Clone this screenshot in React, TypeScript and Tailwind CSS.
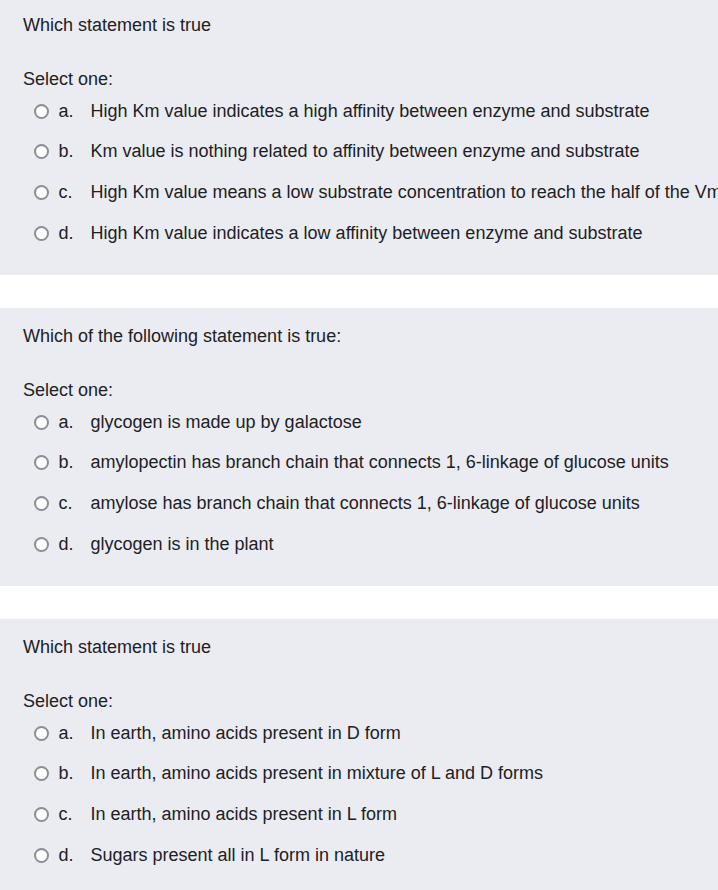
import React from "react";

type Question = {
  prompt: string;
  options: string[];
};

const QUESTIONS: Question[] = [
  {
    prompt: "Which statement is true",
    options: [
      "High Km value indicates a high affinity between enzyme and substrate",
      "Km value is nothing related to affinity between enzyme and substrate",
      "High Km value means a low substrate concentration to reach the half of the Vmax",
      "High Km value indicates a low affinity between enzyme and substrate",
    ],
  },
  {
    prompt: "Which of the following statement is true:",
    options: [
      "glycogen is made up by galactose",
      "amylopectin has branch chain that connects 1, 6-linkage of glucose units",
      "amylose has branch chain that connects 1, 6-linkage of glucose units",
      "glycogen is in the plant",
    ],
  },
  {
    prompt: "Which statement is true",
    options: [
      "In earth, amino acids present in D form",
      "In earth, amino acids present in mixture of L and D forms",
      "In earth, amino acids present in L form",
      "Sugars present all in L form in nature",
    ],
  },
];

const LETTERS = ["a.", "b.", "c.", "d."];

function QuestionCard({ q }: { q: Question }) {
  return (
    <div className="h-[278px] bg-[#ebecf1] pl-[23px] pt-[15px]">
      <div className="leading-[27px]">{q.prompt}</div>
      <div className="mt-[28px] leading-[24px]">Select one:</div>
      <div>
        {q.options.map((opt, i) => (
          <label key={i} className="flex h-[40.67px] items-center pl-[10.5px]">
            <span className="box-border h-[15px] w-[15px] shrink-0 rounded-full border-2 border-[#8b8e94] bg-white" />
            <span className="ml-[10px] w-[32px] shrink-0">{LETTERS[i]}</span>
            <span className="whitespace-nowrap">{opt}</span>
          </label>
        ))}
      </div>
    </div>
  );
}

export default function App() {
  return (
    <div className="h-[890px] overflow-hidden bg-white font-['Liberation_Sans',Arial,sans-serif] text-[18px] text-[#1d2125]">
      <div className="-mt-[3px] flex flex-col gap-[33px]">
        {QUESTIONS.map((q, i) => (
          <QuestionCard key={i} q={q} />
        ))}
      </div>
    </div>
  );
}
